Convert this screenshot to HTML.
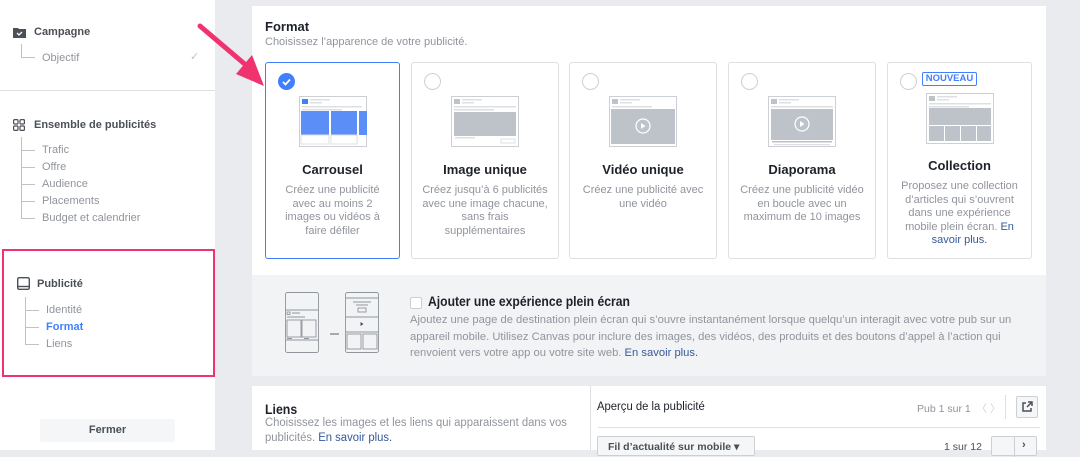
<!DOCTYPE html>
<html><head><meta charset="utf-8"><style>
*{margin:0;padding:0;box-sizing:border-box}
body{width:1080px;height:450px;overflow:hidden;background:#e9ebee;font-family:"Liberation Sans",sans-serif;position:relative;color:#1d2129}
.a{position:absolute}
.side{left:0;top:0;width:215px;height:450px;background:#fff}
.h{font-size:11px;font-weight:bold;color:#4b4f56}
.it{font-size:11px;color:#90949c}
.tl{border-left:1px solid #bec2c9}
.card{position:absolute;top:62px;height:197px;border:1px solid #dddfe2;border-radius:3px;background:#fff;text-align:center}
.card .t{position:absolute;left:0;right:0;top:99px;font-size:13px;font-weight:bold;color:#1d2129}
.card .d{position:absolute;left:50%;top:121px;font-size:11px;line-height:13.6px;color:#90949c;white-space:nowrap;transform:translateX(-50%)}
.rad{position:absolute;left:12px;top:10px;width:17px;height:17px;border:1px solid #ccd0d5;border-radius:50%}
.thumb{position:absolute;top:33px;left:50%;margin-left:-34px}
.cond{white-space:nowrap;transform-origin:0 0}
a,.lk{color:#365899}
</style></head><body>
<div class="a side">
  <svg class="a" style="left:13px;top:27px" width="13" height="11" viewBox="0 0 13 11"><path d="M0 1h5l1 1h7v9H0z" fill="#4b4f56"/><path d="M4 6l2 2 3-3" stroke="#fff" stroke-width="1.3" fill="none"/></svg>
  <div class="a h" style="left:34px;top:26px">Campagne</div>
  <div class="a tl" style="left:21px;top:44px;width:14px;height:14px;border-bottom:1px solid #bec2c9"></div>
  <div class="a it" style="left:42px;top:52px">Objectif</div>
  <div class="a" style="left:190px;top:50px;color:#bec2c9;font-size:11px">✓</div>
  <div class="a" style="left:0;top:90px;width:215px;border-top:1px solid #dddfe2"></div>
  <svg class="a" style="left:13px;top:119px" width="12" height="12" viewBox="0 0 12 12" fill="none" stroke="#4b4f56" stroke-width="1.2"><rect x=".6" y=".6" width="4.4" height="4.4" rx="1"/><rect x="7" y=".6" width="4.4" height="4.4" rx="1"/><rect x=".6" y="7" width="4.4" height="4.4" rx="1"/><rect x="7" y="7" width="4.4" height="4.4" rx="1"/></svg>
  <div class="a h" style="left:34px;top:119px">Ensemble de publicités</div>
  <div class="a tl" style="left:21px;top:137px;height:81px"></div>
  <div class="a" style="left:21px;top:150px;width:14px;border-top:1px solid #bec2c9"></div>
  <div class="a" style="left:21px;top:167px;width:14px;border-top:1px solid #bec2c9"></div>
  <div class="a" style="left:21px;top:184px;width:14px;border-top:1px solid #bec2c9"></div>
  <div class="a" style="left:21px;top:201px;width:14px;border-top:1px solid #bec2c9"></div>
  <div class="a" style="left:21px;top:218px;width:14px;border-top:1px solid #bec2c9"></div>
  <div class="a it" style="left:42px;top:144px">Trafic</div>
  <div class="a it" style="left:42px;top:161px">Offre</div>
  <div class="a it" style="left:42px;top:178px">Audience</div>
  <div class="a it" style="left:42px;top:195px">Placements</div>
  <div class="a it" style="left:42px;top:212px">Budget et calendrier</div>
  <div class="a" style="left:2px;top:249px;width:213px;height:128px;border:2px solid #f0326e"></div>
  <svg class="a" style="left:17px;top:277px" width="13" height="13" viewBox="0 0 13 13" fill="none" stroke="#4b4f56" stroke-width="1.4"><rect x=".7" y=".7" width="11.6" height="11.6" rx="1.5"/><path d="M.7 9.5h11.6"/></svg>
  <div class="a h" style="left:37px;top:278px">Publicité</div>
  <div class="a tl" style="left:25px;top:297px;height:47px"></div>
  <div class="a" style="left:25px;top:310px;width:14px;border-top:1px solid #bec2c9"></div>
  <div class="a" style="left:25px;top:327px;width:14px;border-top:1px solid #bec2c9"></div>
  <div class="a" style="left:25px;top:344px;width:14px;border-top:1px solid #bec2c9"></div>
  <div class="a it" style="left:46px;top:304px">Identité</div>
  <div class="a" style="left:46px;top:321px;font-size:11px;font-weight:bold;color:#4080ff">Format</div>
  <div class="a it" style="left:46px;top:338px">Liens</div>
  <div class="a" style="left:40px;top:419px;width:135px;height:23px;background:#f5f6f7;border-radius:2px;font-size:11px;font-weight:bold;color:#4b4f56;text-align:center;line-height:23px">Fermer</div>
</div>

<div class="a" style="left:252px;top:6px;width:794px;height:269px;background:#fff"></div>
<div class="a" style="left:265px;top:19px;font-size:13px;font-weight:bold">Format</div>
<div class="a" style="left:265px;top:36px;font-size:11px;color:#90949c">Choisissez l’apparence de votre publicité.</div>

<div class="card" style="left:265px;width:135px;border-color:#4080ff">
  <div class="rad" style="background:#4080ff;border-color:#4080ff"><svg width="17" height="17" style="position:absolute;left:-1px;top:-1px"><path d="M5 9l2.5 2.5L12 6.5" stroke="#fff" stroke-width="1.8" fill="none"/></svg></div>
  <svg class="thumb" width="68" height="51" viewBox="0 0 68 51"><rect x=".5" y=".5" width="67" height="50" fill="#fff" stroke="#ccd0d5"/><rect x="3" y="3" width="6" height="5" fill="#4080ff"/><rect x="11" y="3" width="20" height="1.5" fill="#dddfe2"/><rect x="11" y="6" width="12" height="1.5" fill="#dddfe2"/><rect x="3" y="10" width="60" height="1.5" fill="#dddfe2"/><rect x="3" y="13" width="40" height="1.5" fill="#dddfe2"/><g fill="#5c8ef8"><rect x="2" y="15" width="28" height="24"/><rect x="32" y="15" width="26" height="24"/><rect x="60" y="15" width="8" height="24"/></g><g fill="none" stroke="#dddfe2"><rect x="2" y="39" width="28" height="9"/><rect x="32" y="39" width="26" height="9"/></g></svg>
  <div class="t">Carrousel</div>
  <div class="d">Créez une publicité<br>avec au moins 2<br>images ou vidéos à<br>faire défiler</div>
</div>
<div class="card" style="left:411px;width:148px">
  <div class="rad"></div>
  <svg class="thumb" width="68" height="51" viewBox="0 0 68 51"><rect x=".5" y=".5" width="67" height="50" fill="#fff" stroke="#ccd0d5"/><rect x="3" y="3" width="6" height="5" fill="#bec2c9"/><rect x="11" y="3" width="20" height="1.5" fill="#dddfe2"/><rect x="11" y="6" width="12" height="1.5" fill="#dddfe2"/><rect x="3" y="10" width="62" height="1.5" fill="#dddfe2"/><rect x="3" y="13" width="40" height="1.5" fill="#dddfe2"/><rect x="3" y="16" width="62" height="24" fill="#bec2c9"/><rect x="4" y="41" width="20" height="1.5" fill="#dddfe2"/><rect x="50" y="43" width="14" height="4" fill="none" stroke="#dddfe2"/></svg>
  <div class="t">Image unique</div>
  <div class="d">Créez jusqu’à 6 publicités<br>avec une image chacune,<br>sans frais<br>supplémentaires</div>
</div>
<div class="card" style="left:569px;width:148px">
  <div class="rad"></div>
  <svg class="thumb" width="68" height="51" viewBox="0 0 68 51"><rect x=".5" y=".5" width="67" height="50" fill="#fff" stroke="#ccd0d5"/><rect x="3" y="3" width="6" height="5" fill="#bec2c9"/><rect x="11" y="3" width="20" height="1.5" fill="#dddfe2"/><rect x="11" y="6" width="12" height="1.5" fill="#dddfe2"/><rect x="3" y="10" width="40" height="1.5" fill="#dddfe2"/><rect x="2" y="13" width="64" height="35" fill="#bec2c9"/><circle cx="34" cy="30" r="7" fill="none" stroke="#fff" stroke-width="1.2"/><path d="M32 27v6l4.5-3z" fill="#fff"/></svg>
  <div class="t">Vidéo unique</div>
  <div class="d">Créez une publicité avec<br>une vidéo</div>
</div>
<div class="card" style="left:728px;width:148px">
  <div class="rad"></div>
  <svg class="thumb" width="68" height="51" viewBox="0 0 68 51"><rect x=".5" y=".5" width="67" height="50" fill="#fff" stroke="#ccd0d5"/><rect x="3" y="3" width="6" height="5" fill="#bec2c9"/><rect x="11" y="3" width="20" height="1.5" fill="#dddfe2"/><rect x="11" y="6" width="12" height="1.5" fill="#dddfe2"/><rect x="3" y="10" width="62" height="1.5" fill="#dddfe2"/><rect x="3" y="13" width="62" height="31" fill="#bec2c9"/><rect x="4" y="45" width="60" height="1.5" fill="#bec2c9"/><rect x="6" y="48" width="56" height="1.2" fill="#dddfe2"/><circle cx="34" cy="28" r="7" fill="none" stroke="#fff" stroke-width="1.2"/><path d="M32 25v6l4.5-3z" fill="#fff"/></svg>
  <div class="t">Diaporama</div>
  <div class="d">Créez une publicité vidéo<br>en boucle avec un<br>maximum de 10 images</div>
</div>
<div class="card" style="left:887px;width:145px">
  <div class="rad"></div>
  <div style="position:absolute;left:34px;top:9px;width:55px;height:14px;border:1px solid #4080ff;border-radius:2px;font-size:9.5px;font-weight:bold;color:#4080ff;line-height:12px">NOUVEAU</div>
  <svg class="thumb" style="top:30px" width="68" height="51" viewBox="0 0 68 51"><rect x=".5" y=".5" width="67" height="50" fill="#fff" stroke="#ccd0d5"/><rect x="3" y="3" width="6" height="5" fill="#bec2c9"/><rect x="11" y="3" width="20" height="1.5" fill="#dddfe2"/><rect x="11" y="6" width="12" height="1.5" fill="#dddfe2"/><rect x="3" y="10" width="62" height="1.5" fill="#dddfe2"/><rect x="3" y="13" width="40" height="1.5" fill="#dddfe2"/><rect x="3" y="15" width="62" height="17" fill="#bec2c9"/><g fill="#bec2c9"><rect x="3" y="33" width="15" height="15"/><rect x="19" y="33" width="15" height="15"/><rect x="35" y="33" width="15" height="15"/><rect x="51" y="33" width="14" height="15"/></g></svg>
  <div class="t" style="top:95px">Collection</div>
  <div class="d" style="top:117px">Proposez une collection<br>d’articles qui s’ouvrent<br>dans une expérience<br>mobile plein écran. <span class="lk">En</span><br><span class="lk">savoir plus.</span></div>
</div>

<div class="a" style="left:252px;top:275px;width:794px;height:101px;background:#f2f3f5"></div>
<svg class="a" style="left:284px;top:291px" width="100" height="64" viewBox="0 0 100 64" fill="none" stroke="#90949c" stroke-width=".9"><rect x="1.5" y="1.5" width="33" height="60" rx="2"/><path d="M1.5 19h33M1.5 49h33"/><rect x="3" y="21" width="3" height="2.5"/><path d="M8 22h8M3 26h18"/><rect x="3" y="29" width="14" height="17"/><rect x="18" y="29" width="14" height="17"/><path d="M3 47.5h5M20 47.5h5"/><path d="M46 43h9" stroke="#4b4f56"/><rect x="61.5" y="1.5" width="33" height="60" rx="2"/><path d="M61.5 7h33M61.5 26h33M61.5 41h33M69 11h18M72 14h12"/><rect x="74" y="17" width="8" height="4"/><path d="M76.5 31v4l3-2z" fill="#4b4f56" stroke="none"/><rect x="63" y="43" width="14" height="15"/><rect x="79" y="43" width="14" height="15"/></svg>
<div class="a" style="left:410px;top:297px;width:12px;height:12px;border:1px solid #ccd0d5;border-radius:2px;background:#fff"></div>
<div class="a cond" style="left:428px;top:294px;font-size:13.5px;font-weight:bold;color:#1d2129;transform:scaleX(0.9)">Ajouter une expérience plein écran</div>
<div class="a cond" style="left:410px;top:312px;font-size:11px;line-height:16.5px;color:#90949c;transform:scaleX(1.02)">Ajoutez une page de destination plein écran qui s’ouvre instantanément lorsque quelqu’un interagit avec votre pub sur un<br>appareil mobile. Utilisez Canvas pour inclure des images, des vidéos, des produits et des boutons d’appel à l’action qui<br>renvoient vers votre app ou votre site web. <span class="lk">En savoir plus.</span></div>

<div class="a" style="left:252px;top:386px;width:794px;height:64px;background:#fff"></div>
<div class="a" style="left:590px;top:386px;height:64px;border-left:1px solid #dddfe2"></div>
<div class="a cond" style="left:265px;top:401px;font-size:14px;font-weight:bold;transform:scaleX(0.88)">Liens</div>
<div class="a cond" style="left:265px;top:416px;font-size:11.5px;line-height:15px;color:#90949c;transform:scaleX(0.98)">Choisissez les images et les liens qui apparaissent dans vos<br>publicités. <span class="lk">En savoir plus.</span></div>
<div class="a cond" style="left:597px;top:401px;font-size:11.5px;color:#1d2129;transform:scaleX(0.98)">Aperçu de la publicité</div>
<div class="a" style="left:917px;top:401px;font-size:10.5px;color:#90949c">Pub 1 sur 1 &nbsp;<span style="color:#ccd0d5">〈 〉</span></div>
<div class="a" style="left:1005px;top:395px;height:24px;border-left:1px solid #dddfe2"></div>
<div class="a" style="left:1016px;top:396px;width:22px;height:22px;border:1px solid #ccd0d5;border-radius:2px;background:#f5f6f7"><svg width="20" height="20"><path d="M9 6H6v8h8v-3M10 10l5-5M11 5h4v4" stroke="#4b4f56" stroke-width="1.5" fill="none"/></svg></div>
<div class="a" style="left:598px;top:427px;width:442px;border-top:1px solid #dddfe2"></div>
<div class="a" style="left:597px;top:436px;width:158px;height:20px;border:1px solid #ccd0d5;border-radius:2px;background:#f5f6f7;font-size:10.5px;font-weight:bold;color:#4b4f56;padding:4px 0 0 10px">Fil d’actualité sur mobile ▾</div>
<div class="a" style="left:944px;top:441px;font-size:10.5px;color:#4b4f56">1 sur 12</div>
<div class="a" style="left:991px;top:436px;width:46px;height:20px;border:1px solid #ccd0d5;border-radius:2px;background:#f5f6f7"><div style="position:absolute;left:22px;top:0;height:20px;border-left:1px solid #ccd0d5"></div><span style="position:absolute;left:30px;top:2px;font-size:11px;font-weight:bold;color:#4b4f56">›</span></div>

<svg class="a" style="left:0;top:0" width="280" height="100"><path d="M200 26L247 66" stroke="#f0326e" stroke-width="5" stroke-linecap="round"/><path d="M264 86L252 55L236 74Z" fill="#f0326e"/></svg>
</body></html>
